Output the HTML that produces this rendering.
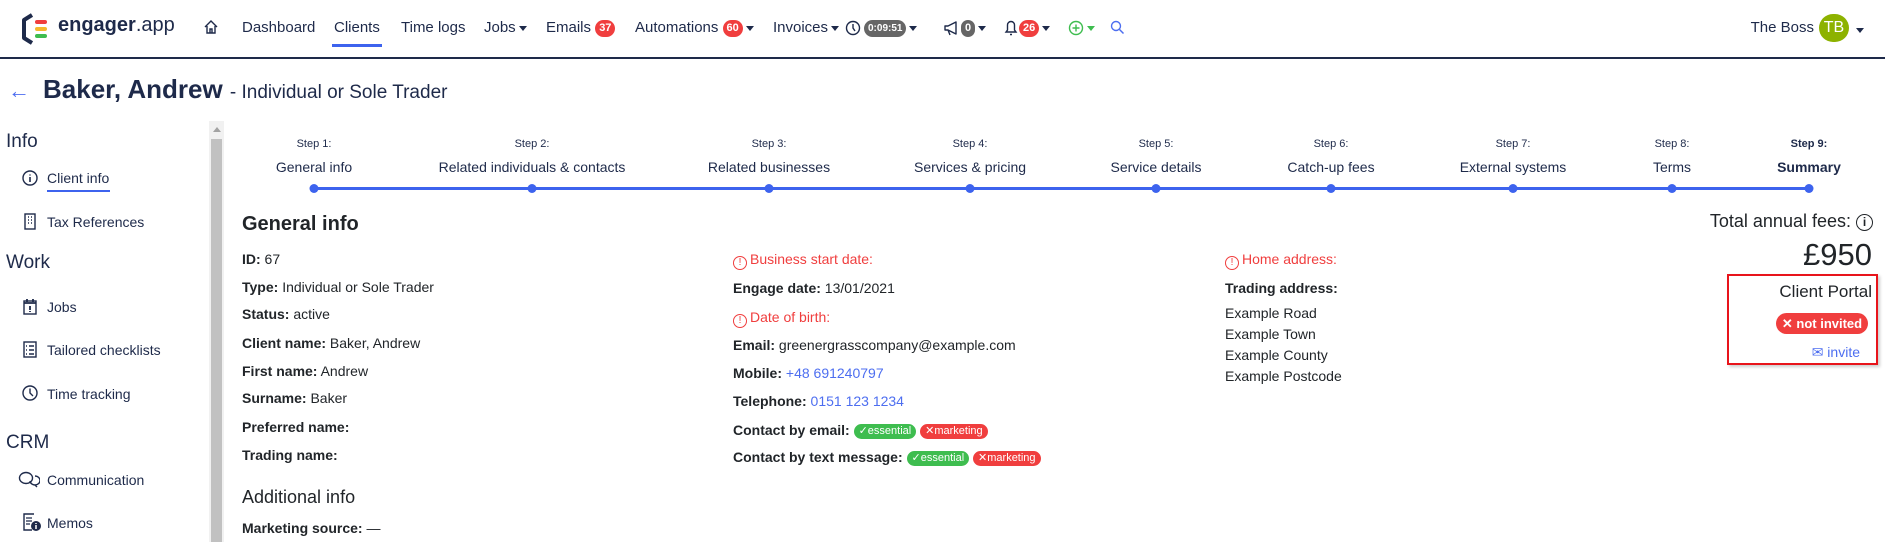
<!DOCTYPE html>
<html><head><meta charset="utf-8"><style>
*{margin:0;padding:0;box-sizing:border-box}
body{width:1885px;height:542px;overflow:hidden;background:#fff;font-family:"Liberation Sans",sans-serif;color:#212529;position:relative}
.a{position:absolute;white-space:nowrap}
.nav{font-size:15px;color:#1e2a4a;top:19px}
.badge{display:inline-block;background:#f03e3e;color:#fff;font-size:11px;font-weight:bold;border-radius:9px;padding:2px 4px;line-height:13px;vertical-align:middle}
.car{display:inline-block;width:0;height:0;border-left:4px solid transparent;border-right:4px solid transparent;border-top:5px solid #1e2a4a;vertical-align:middle;margin-left:3px}
.sh{font-size:19px;color:#1e2a4a;left:6px}
.si{font-size:14px;color:#1e2a4a;left:47px}
.ic{left:22px}
.st{font-size:11px;color:#1e2a4a;transform:translateX(-50%);top:138px}
.sn{font-size:14px;color:#1e2a4a;transform:translateX(-50%);top:159px}
.dot{width:9px;height:9px;border-radius:50%;background:#3d63ee;top:184px;transform:translateX(-50%)}
.f{font-size:14px;color:#212529}
.f b{font-weight:bold}
.red{color:#f03e3e}
.blue{color:#4d6ef0}
.ex{display:inline-block;width:14px;height:14px;border:1.3px solid #f03e3e;border-radius:50%;font-size:10px;text-align:center;line-height:12px;vertical-align:-1px;margin-right:3px}
.pill{display:inline-block;color:#fff;font-size:11px;border-radius:8px;padding:1px 5px;line-height:13px;vertical-align:1px}
.g{background:#3ebd4f}.r{background:#f03e3e}
</style></head><body>
<!-- header -->
<svg class="a" style="left:22px;top:13px" width="30" height="32" viewBox="0 0 30 32">
<path d="M10 2 L2 7 L2 25 L10 30" fill="none" stroke="#1e2a4a" stroke-width="4" stroke-linejoin="round"/>
<rect x="13" y="7" width="12" height="4" rx="2" fill="#f03e3e"/>
<rect x="13" y="14" width="12" height="4" rx="2" fill="#f5b82e"/>
<rect x="13" y="21" width="12" height="4" rx="2" fill="#3ebd4f"/>
</svg>
<div class="a" style="left:58px;top:14px;font-size:20px;color:#1e2a4a"><b>engager</b>.app</div>
<svg class="a" style="left:203px;top:19px" width="16" height="16" viewBox="0 0 16 16"><path d="M2 8 L8 2 L14 8 M4 7 V14 H12 V7 M7 14 V10 H9 V14" fill="none" stroke="#1e2a4a" stroke-width="1.4"/></svg>
<div class="a nav" style="left:242px">Dashboard</div>
<div class="a nav" style="left:334px">Clients</div>
<div class="a" style="left:332px;top:44px;width:50px;height:3px;background:#3d63ee"></div>
<div class="a nav" style="left:401px">Time logs</div>
<div class="a nav" style="left:484px">Jobs<span class="car"></span></div>
<div class="a nav" style="left:546px">Emails <span class="badge">37</span></div>
<div class="a nav" style="left:635px">Automations <span class="badge">60</span><span class="car"></span></div>
<div class="a nav" style="left:773px">Invoices<span class="car"></span></div>
<svg class="a" style="left:845px;top:20px" width="16" height="16"><circle cx="8" cy="8" r="6.5" fill="none" stroke="#1e2a4a" stroke-width="1.4"/><path d="M8 4V8L10 11" fill="none" stroke="#1e2a4a" stroke-width="1.4"/></svg>
<div class="a nav" style="left:864px"><span class="badge" style="background:#666;font-size:10px">0:09:51</span><span class="car"></span></div>
<svg class="a" style="left:943px;top:20px" width="18" height="16"><path d="M2 6H5L13 2V14L5 10H2Z M5 10L7 15" fill="none" stroke="#1e2a4a" stroke-width="1.4" stroke-linejoin="round"/></svg>
<div class="a nav" style="left:961px"><span class="badge" style="background:#666">0</span><span class="car"></span></div>
<svg class="a" style="left:1004px;top:19px" width="14" height="18"><path d="M2 13H12L10.5 11V6A3.5 3.5 0 0 0 3.5 6V11Z M6 15.5H8" fill="none" stroke="#1e2a4a" stroke-width="1.4"/></svg>
<div class="a nav" style="left:1019px"><span class="badge">26</span><span class="car"></span></div>
<svg class="a" style="left:1068px;top:20px" width="16" height="16"><circle cx="8" cy="8" r="6.5" fill="none" stroke="#3ebd4f" stroke-width="1.4"/><path d="M8 4.5V11.5M4.5 8H11.5" stroke="#3ebd4f" stroke-width="1.4"/></svg>
<div class="a nav" style="left:1084px"><span class="car" style="border-top-color:#3ebd4f"></span></div>
<svg class="a" style="left:1110px;top:20px" width="15" height="15" viewBox="0 0 15 15"><circle cx="6" cy="6" r="4.5" fill="none" stroke="#4d6ef0" stroke-width="1.4"/><path d="M9.5 9.5 L13.5 13.5" stroke="#4d6ef0" stroke-width="1.5"/></svg>
<div class="a nav" style="right:71px">The Boss</div>
<div class="a" style="left:1819px;top:14px;width:30px;height:28px;border-radius:14px;background:#8db200;color:#fff;font-size:16px;text-align:center;line-height:28px">TB</div>
<div class="a" style="left:1853px;top:22px"><span class="car"></span></div>
<div class="a" style="left:0;top:57px;width:1885px;height:2px;background:#1e2a4a"></div>
<!-- title -->
<div class="a" style="left:8px;top:78px;font-size:22px;color:#4d6ef0">&#8592;</div>
<div class="a" style="left:43px;top:74px;font-size:26px;color:#1e2a4a"><b>Baker, Andrew</b> <span style="font-size:19px">- Individual or Sole Trader</span></div>
<!-- sidebar -->
<div class="a sh" style="top:131px">Info</div>
<div class="a ic" style="top:170px"><svg width="16" height="16"><circle cx="8" cy="8" r="7" fill="none" stroke="#1e2a4a" stroke-width="1.4"/><path d="M8 7V12M8 4.5V5.5" stroke="#1e2a4a" stroke-width="1.6"/></svg></div>
<div class="a si" style="top:170px">Client info</div>
<div class="a" style="left:47px;top:190px;width:63px;height:2px;background:#3d63ee"></div>
<div class="a ic" style="top:213px"><svg width="16" height="17"><rect x="3" y="1" width="10" height="15" fill="none" stroke="#1e2a4a" stroke-width="1.4"/><path d="M6 4h1M9 4h1M6 7h1M9 7h1M6 10h1M9 10h1" stroke="#1e2a4a" stroke-width="1.6"/></svg></div>
<div class="a si" style="top:214px">Tax References</div>
<div class="a sh" style="top:252px">Work</div>
<div class="a ic" style="top:298px"><svg width="16" height="17"><rect x="2" y="3" width="12" height="13" fill="none" stroke="#1e2a4a" stroke-width="1.4"/><path d="M2 5h12M5 1v3M11 1v3M8 8v4M8 13v1" stroke="#1e2a4a" stroke-width="1.8"/></svg></div>
<div class="a si" style="top:299px">Jobs</div>
<div class="a ic" style="top:341px"><svg width="16" height="17"><rect x="2" y="1" width="12" height="15" fill="none" stroke="#1e2a4a" stroke-width="1.4"/><path d="M4 5h1M7 5h5M4 9h1M7 9h5M4 13h1M7 13h5" stroke="#1e2a4a" stroke-width="1.4"/></svg></div>
<div class="a si" style="top:342px">Tailored checklists</div>
<div class="a ic" style="top:385px"><svg width="16" height="16"><circle cx="8" cy="8" r="7" fill="none" stroke="#1e2a4a" stroke-width="1.4"/><path d="M8 3.5V8L11 11" fill="none" stroke="#1e2a4a" stroke-width="1.4"/></svg></div>
<div class="a si" style="top:386px">Time tracking</div>
<div class="a sh" style="top:432px">CRM</div>
<div class="a" style="left:18px;top:471px"><svg width="22" height="17"><ellipse cx="8" cy="7" rx="6.5" ry="5.5" fill="none" stroke="#1e2a4a" stroke-width="1.4"/><path d="M12 10 a5 4.5 0 1 0 5 -5 M17 14 l2 2" fill="none" stroke="#1e2a4a" stroke-width="1.4"/></svg></div>
<div class="a si" style="top:472px">Communication</div>
<div class="a ic" style="top:513px"><svg width="20" height="19"><path d="M12 1H2V17H10" fill="none" stroke="#1e2a4a" stroke-width="1.4"/><path d="M4 5h6M4 8h6M4 11h4" stroke="#1e2a4a" stroke-width="1.3"/><circle cx="14" cy="13" r="5" fill="#1e2a4a"/><path d="M14 12v4M14 10v1" stroke="#fff" stroke-width="1.5"/></svg></div>
<div class="a si" style="top:515px">Memos</div>
<div class="a" style="left:209px;top:121px;width:15px;height:421px;background:#f1f1f1"></div>
<div class="a" style="left:211px;top:139px;width:11px;height:403px;background:#c1c1c1"></div>
<div class="a" style="left:213px;top:127px;width:0;height:0;border-left:4px solid transparent;border-right:4px solid transparent;border-bottom:5px solid #a3a3a3"></div>
<!-- steps -->
<div class="a" style="left:314px;top:187px;width:1495px;height:3px;background:#3d63ee"></div>
<div class="a st" style="left:314px">Step 1:</div><div class="a sn" style="left:314px">General info</div><div class="a dot" style="left:314px"></div>
<div class="a st" style="left:532px">Step 2:</div><div class="a sn" style="left:532px">Related individuals &amp; contacts</div><div class="a dot" style="left:532px"></div>
<div class="a st" style="left:769px">Step 3:</div><div class="a sn" style="left:769px">Related businesses</div><div class="a dot" style="left:769px"></div>
<div class="a st" style="left:970px">Step 4:</div><div class="a sn" style="left:970px">Services &amp; pricing</div><div class="a dot" style="left:970px"></div>
<div class="a st" style="left:1156px">Step 5:</div><div class="a sn" style="left:1156px">Service details</div><div class="a dot" style="left:1156px"></div>
<div class="a st" style="left:1331px">Step 6:</div><div class="a sn" style="left:1331px">Catch-up fees</div><div class="a dot" style="left:1331px"></div>
<div class="a st" style="left:1513px">Step 7:</div><div class="a sn" style="left:1513px">External systems</div><div class="a dot" style="left:1513px"></div>
<div class="a st" style="left:1672px">Step 8:</div><div class="a sn" style="left:1672px">Terms</div><div class="a dot" style="left:1672px"></div>
<div class="a st" style="left:1809px;font-weight:bold">Step 9:</div><div class="a sn" style="left:1809px;font-weight:bold">Summary</div><div class="a dot" style="left:1809px"></div>
<!-- general -->
<div class="a" style="left:242px;top:213px;font-size:20px;font-weight:bold;color:#212529">General info</div>
<div class="a f" style="left:242px;top:251px"><b>ID:</b> 67</div>
<div class="a f" style="left:242px;top:279px"><b>Type:</b> Individual or Sole Trader</div>
<div class="a f" style="left:242px;top:306px"><b>Status:</b> active</div>
<div class="a f" style="left:242px;top:335px"><b>Client name:</b> Baker, Andrew</div>
<div class="a f" style="left:242px;top:363px"><b>First name:</b> Andrew</div>
<div class="a f" style="left:242px;top:390px"><b>Surname:</b> Baker</div>
<div class="a f" style="left:242px;top:419px"><b>Preferred name:</b></div>
<div class="a f" style="left:242px;top:447px"><b>Trading name:</b></div>
<div class="a" style="left:242px;top:487px;font-size:18px">Additional info</div>
<div class="a f" style="left:242px;top:520px"><b>Marketing source:</b> —</div>
<!-- col2 -->
<div class="a f red" style="left:733px;top:251px"><span class="ex">!</span>Business start date:</div>
<div class="a f" style="left:733px;top:280px"><b>Engage date:</b> 13/01/2021</div>
<div class="a f red" style="left:733px;top:309px"><span class="ex">!</span>Date of birth:</div>
<div class="a f" style="left:733px;top:337px"><b>Email:</b> greenergrasscompany@example.com</div>
<div class="a f" style="left:733px;top:365px"><b>Mobile:</b> <span class="blue">+48 691240797</span></div>
<div class="a f" style="left:733px;top:393px"><b>Telephone:</b> <span class="blue">0151 123 1234</span></div>
<div class="a f" style="left:733px;top:422px"><b>Contact by email:</b> <span class="pill g">&#10003;essential</span> <span class="pill r">&#10005;marketing</span></div>
<div class="a f" style="left:733px;top:449px"><b>Contact by text message:</b> <span class="pill g">&#10003;essential</span> <span class="pill r">&#10005;marketing</span></div>
<!-- col3 -->
<div class="a f red" style="left:1225px;top:251px"><span class="ex">!</span>Home address:</div>
<div class="a f" style="left:1225px;top:280px"><b>Trading address:</b></div>
<div class="a f" style="left:1225px;top:305px">Example Road</div>
<div class="a f" style="left:1225px;top:326px">Example Town</div>
<div class="a f" style="left:1225px;top:347px">Example County</div>
<div class="a f" style="left:1225px;top:368px">Example Postcode</div>
<!-- right -->
<div class="a" style="right:12px;top:211px;font-size:18px">Total annual fees: <span style="display:inline-block;width:17px;height:17px;border:1.6px solid #212529;border-radius:50%;font-size:12px;text-align:center;line-height:14px;font-weight:bold;vertical-align:1px">i</span></div>
<div class="a" style="right:13px;top:237px;font-size:31px">£950</div>
<div class="a" style="left:1727px;top:274px;width:151px;height:91px;border:2px solid #e8141b;box-shadow:2px 2px 3px rgba(0,0,0,.2)"></div>
<div class="a" style="right:13px;top:282px;font-size:17px">Client Portal</div>
<div class="a" style="left:1776px;top:313px;width:92px;height:21px;border-radius:11px;background:#f03e3e;color:#fff;font-size:13px;font-weight:bold;text-align:center;line-height:21px">&#10005; not invited</div>
<div class="a blue" style="right:25px;top:344px;font-size:14px">&#9993; invite</div>
</body></html>
